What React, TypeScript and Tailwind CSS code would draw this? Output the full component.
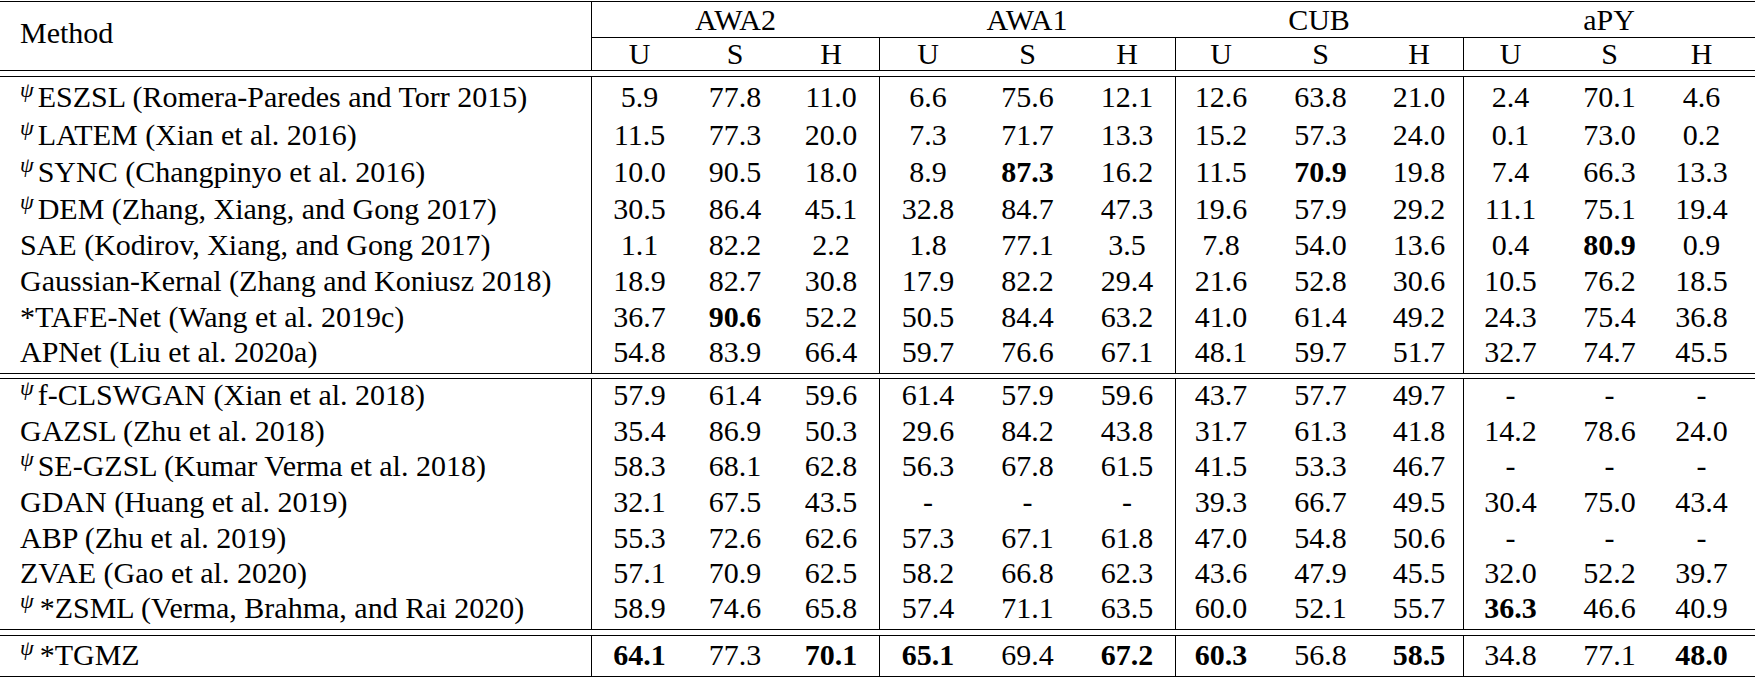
import React from "react";

type Cell = { v: string; b?: boolean };
type Row = { psi?: boolean; name: string; h: string; cells: Cell[] };

const COLS =
  "grid grid-cols-[591px_96px_96px_96px_97px_103px_96px_91px_109px_88px_94px_105px_93px]";

function parse(s: string): Cell[] {
  return s.split(" ").map((t) =>
    t.startsWith("*") ? { v: t.slice(1), b: true } : { v: t }
  );
}

const group1: Row[] = [
  { psi: true, name: "ESZSL (Romera-Paredes and Torr 2015)", h: "h-[41px]", cells: parse("5.9 77.8 11.0 6.6 75.6 12.1 12.6 63.8 21.0 2.4 70.1 4.6") },
  { psi: true, name: "LATEM (Xian et al. 2016)", h: "h-[38px]", cells: parse("11.5 77.3 20.0 7.3 71.7 13.3 15.2 57.3 24.0 0.1 73.0 0.2") },
  { psi: true, name: "SYNC (Changpinyo et al. 2016)", h: "h-[37px]", cells: parse("10.0 90.5 18.0 8.9 *87.3 16.2 11.5 *70.9 19.8 7.4 66.3 13.3") },
  { psi: true, name: "DEM (Zhang, Xiang, and Gong 2017)", h: "h-[37px]", cells: parse("30.5 86.4 45.1 32.8 84.7 47.3 19.6 57.9 29.2 11.1 75.1 19.4") },
  { name: "SAE (Kodirov, Xiang, and Gong 2017)", h: "h-[36px]", cells: parse("1.1 82.2 2.2 1.8 77.1 3.5 7.8 54.0 13.6 0.4 *80.9 0.9") },
  { name: "Gaussian-Kernal (Zhang and Koniusz 2018)", h: "h-[36px]", cells: parse("18.9 82.7 30.8 17.9 82.2 29.4 21.6 52.8 30.6 10.5 76.2 18.5") },
  { name: "*TAFE-Net (Wang et al. 2019c)", h: "h-[35px]", cells: parse("36.7 *90.6 52.2 50.5 84.4 63.2 41.0 61.4 49.2 24.3 75.4 36.8") },
  { name: "APNet (Liu et al. 2020a)", h: "h-[36px]", cells: parse("54.8 83.9 66.4 59.7 76.6 67.1 48.1 59.7 51.7 32.7 74.7 45.5") },
];

const group2: Row[] = [
  { psi: true, name: "f-CLSWGAN (Xian et al. 2018)", h: "h-[37px]", cells: parse("57.9 61.4 59.6 61.4 57.9 59.6 43.7 57.7 49.7 - - -") },
  { name: "GAZSL (Zhu et al. 2018)", h: "h-[35px]", cells: parse("35.4 86.9 50.3 29.6 84.2 43.8 31.7 61.3 41.8 14.2 78.6 24.0") },
  { psi: true, name: "SE-GZSL (Kumar Verma et al. 2018)", h: "h-[36px]", cells: parse("58.3 68.1 62.8 56.3 67.8 61.5 41.5 53.3 46.7 - - -") },
  { name: "GDAN (Huang et al. 2019)", h: "h-[36px]", cells: parse("32.1 67.5 43.5 - - - 39.3 66.7 49.5 30.4 75.0 43.4") },
  { name: "ABP (Zhu et al. 2019)", h: "h-[35px]", cells: parse("55.3 72.6 62.6 57.3 67.1 61.8 47.0 54.8 50.6 - - -") },
  { name: "ZVAE (Gao et al. 2020)", h: "h-[35px]", cells: parse("57.1 70.9 62.5 58.2 66.8 62.3 43.6 47.9 45.5 32.0 52.2 39.7") },
  { psi: true, name: "*ZSML (Verma, Brahma, and Rai 2020)", h: "h-[36px]", cells: parse("58.9 74.6 65.8 57.4 71.1 63.5 60.0 52.1 55.7 *36.3 46.6 40.9") },
];

const last: Row = {
  psi: true,
  name: "*TGMZ",
  h: "h-[41px]",
  cells: parse("*64.1 77.3 *70.1 *65.1 69.4 *67.2 *60.3 56.8 *58.5 34.8 77.1 *48.0"),
};

function Psi({ star }: { star: boolean }) {
  return (
    <span
      className={
        "relative top-[-10px] text-[22px] italic leading-none " +
        (star ? "mr-[6px]" : "mr-[4px]")
      }
    >
      ψ
    </span>
  );
}

function NumCell({ c, i }: { c: Cell; i: number }) {
  const groupStart = i % 3 === 0;
  return (
    <div
      className={
        "flex items-end justify-center pb-[6px] leading-none " +
        (groupStart ? "border-l border-black " : "") +
        (i === 11 ? "pr-[14px] " : "") +
        (c.b ? "font-bold" : "")
      }
    >
      {c.v}
    </div>
  );
}

function DataRow({ r, extra = "" }: { r: Row; extra?: string }) {
  return (
    <div className={COLS + " " + r.h + " " + extra}>
      <div className="flex items-end whitespace-pre pb-[6px] pl-[20px] leading-none">
        <span className="leading-none">
          {r.psi ? <Psi star={r.name.startsWith("*")} /> : null}
          {r.name}
        </span>
      </div>
      {r.cells.map((c, i) => (
        <NumCell key={i} c={c} i={i} />
      ))}
    </div>
  );
}

export default function App() {
  const groups = ["AWA2", "AWA1", "CUB", "aPY"];
  return (
    <div className="h-[679px] w-[1755px] overflow-hidden bg-white pt-px font-serif text-[30px] text-black">
      <div className="font-[Liberation_Serif]">
        <div className="border-t border-black" />
        {/* header */}
        <div className={COLS + " h-[68px] grid-rows-[36px_32px]"}>
          <div className="row-span-2 flex items-center pb-[6px] pl-[20px] leading-none">
            Method
          </div>
          {groups.map((g, i) => (
            <div
              key={g}
              className={
                "col-span-3 flex items-center justify-center border-b border-black leading-none " +
                (i === 0 ? "border-l " : "")
              }
            >
              {g}
            </div>
          ))}
          {groups.map((g, gi) =>
            ["U", "S", "H"].map((s, si) => (
              <div
                key={g + s}
                className={
                  "flex items-center justify-center leading-none " +
                  (si === 0 ? "border-l border-black " : "") +
                  (gi === 3 && si === 2 ? "pr-[14px]" : "")
                }
              >
                {s}
              </div>
            ))
          )}
        </div>
        <div className="h-[7px] border-y border-black" />
        {group1.map((r) => (
          <DataRow key={r.name} r={r} />
        ))}
        <div className="h-[6px] border-y border-black" />
        {group2.map((r) => (
          <DataRow key={r.name} r={r} />
        ))}
        <div className="h-[7px] border-y border-black" />
        <DataRow r={last} extra="border-b border-black" />
      </div>
    </div>
  );
}
